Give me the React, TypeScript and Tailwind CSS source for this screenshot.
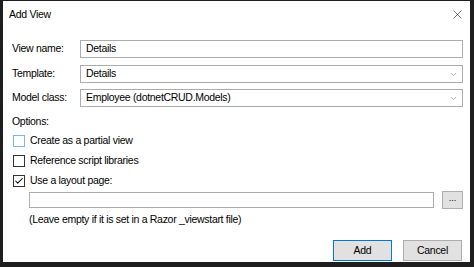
import { Check, ChevronDown, X } from 'lucide-react';

const font = { fontFamily: '"Liberation Sans", Arial, sans-serif' };

function Field({ label, value, select }: { label: string; value: string; select?: boolean }) {
  return (
    <div className="flex items-center h-[18px]">
      <div className="w-[68px] text-[10.5px] tracking-[-0.3px] text-black">{label}</div>
      <div className="flex-1 h-[18px] border border-[#acacac] bg-white flex items-center pl-[5px] pr-[4px] text-[10.5px] tracking-[-0.3px] text-black">
        <span className="flex-1">{value}</span>
        {select && <ChevronDown size={9} strokeWidth={1.5} className="text-[#707070]" />}
      </div>
    </div>
  );
}

function CheckRow({ label, checked, hover }: { label: string; checked?: boolean; hover?: boolean }) {
  return (
    <div className="flex items-center h-[14px] gap-[5px]">
      <div
        className={`w-[12px] h-[12px] border flex items-center justify-center bg-white ${
          hover ? 'border-[#7eb4ea]' : 'border-[#333333]'
        }`}
      >
        {checked && <Check size={10} strokeWidth={2.5} className="text-black" />}
      </div>
      <span className="text-[10.5px] tracking-[-0.3px] text-black">{label}</span>
    </div>
  );
}

export default function App() {
  return (
    <div className="w-[474px] h-[267px] bg-[#1e1e1e] pt-[1px] pl-[3px] pr-[4px] pb-[5px]" style={font}>
      <div className="w-full h-full bg-white flex flex-col">
        <div className="h-[27px] flex items-center justify-between pl-[6px] pr-[5px]">
          <span className="text-[10.5px] tracking-[-0.3px] text-black">Add View</span>
          <X size={15} strokeWidth={1} className="text-[#222]" />
        </div>

        <div className="flex flex-col pl-[9px] pr-[7px]">
          <div className="mt-[12px]">
            <Field label="View name:" value="Details" />
          </div>
          <div className="mt-[7px]">
            <Field label="Template:" value="Details" select />
          </div>
          <div className="mt-[6px]">
            <Field label="Model class:" value="Employee (dotnetCRUD.Models)" select />
          </div>
          <div className="mt-[6px] h-[18px] flex items-center text-[10.5px] tracking-[-0.3px] text-black">Options:</div>
          <div className="mt-[3px] pl-[1px] flex flex-col gap-[6px]">
            <CheckRow label="Create as a partial view" hover />
            <CheckRow label="Reference script libraries" />
            <CheckRow label="Use a layout page:" checked />
          </div>
          <div className="mt-[3px] pl-[17px] flex items-center gap-[8px]">
            <div className="flex-1 h-[16px] border border-[#acacac] bg-white" />
            <div className="w-[21px] h-[18px] border border-[#adadad] bg-[#e1e1e1] flex items-center justify-center text-[9px] text-black leading-none pb-[3px]">
              ...
            </div>
          </div>
          <div className="mt-[2px] pl-[17px] h-[18px] flex items-center text-[10.5px] tracking-[-0.3px] text-black">
            (Leave empty if it is set in a Razor _viewstart file)
          </div>
          <div className="mt-[11px] flex justify-end gap-[11px] pr-[1px]">
            <button className="w-[59px] h-[21px] border border-[#0078d7] bg-[#e1e1e1] text-[10.5px] tracking-[-0.3px] text-black">
              Add
            </button>
            <button className="w-[59px] h-[21px] border border-[#adadad] bg-[#e1e1e1] text-[10.5px] tracking-[-0.3px] text-black">
              Cancel
            </button>
          </div>
        </div>
      </div>
    </div>
  );
}
